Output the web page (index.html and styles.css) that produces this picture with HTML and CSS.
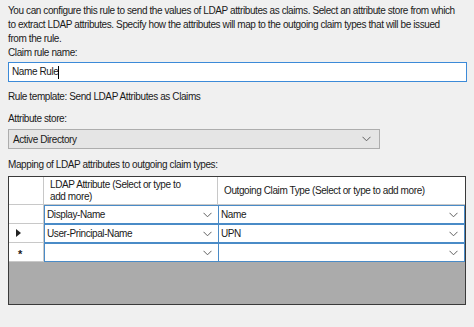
FILE: index.html
```html
<!DOCTYPE html>
<html lang="en">
<head>
<meta charset="UTF-8">
<title>Configure Rule</title>
<link rel="stylesheet" href="styles.css">
</head>
<body>
<div class="dialog">
  <p class="intro">You can configure this rule to send the values of LDAP attributes as claims. Select an attribute store from which to extract LDAP attributes. Specify how the attributes will map to the outgoing claim types that will be issued from the rule.</p>

  <label class="lbl lbl-name">Claim rule name:</label>
  <div class="textbox">Name Rule<span class="caret"></span></div>

  <div class="lbl lbl-template">Rule template: Send LDAP Attributes as Claims</div>

  <label class="lbl lbl-store">Attribute store:</label>
  <div class="combo">
    <span>Active Directory</span>
    <svg class="chev" width="9" height="6" viewBox="0 0 9 6"><path d="M0.5 0.8 L4.5 4.8 L8.5 0.8" fill="none" stroke="#606060" stroke-width="1"/></svg>
  </div>

  <label class="lbl lbl-map">Mapping of LDAP attributes to outgoing claim types:</label>
  <div class="grid">
    <div class="row head">
      <div class="rh"></div>
      <div class="hc">LDAP Attribute (Select or type to add more)</div>
      <div class="hc">Outgoing Claim Type (Select or type to add more)</div>
    </div>
    <div class="row">
      <div class="rh"></div>
      <div class="cell"><span>Display-Name</span><svg class="chev" width="9" height="6" viewBox="0 0 9 6"><path d="M0.5 0.8 L4.5 4.8 L8.5 0.8" fill="none" stroke="#606060" stroke-width="1"/></svg></div>
      <div class="cell"><span>Name</span><svg class="chev" width="9" height="6" viewBox="0 0 9 6"><path d="M0.5 0.8 L4.5 4.8 L8.5 0.8" fill="none" stroke="#606060" stroke-width="1"/></svg></div>
    </div>
    <div class="row">
      <div class="rh"><svg width="5" height="8" viewBox="0 0 5 8"><path d="M0 0 L5 4 L0 8 Z" fill="#222"/></svg></div>
      <div class="cell"><span>User-Principal-Name</span><svg class="chev" width="9" height="6" viewBox="0 0 9 6"><path d="M0.5 0.8 L4.5 4.8 L8.5 0.8" fill="none" stroke="#606060" stroke-width="1"/></svg></div>
      <div class="cell"><span>UPN</span><svg class="chev" width="9" height="6" viewBox="0 0 9 6"><path d="M0.5 0.8 L4.5 4.8 L8.5 0.8" fill="none" stroke="#606060" stroke-width="1"/></svg></div>
    </div>
    <div class="row">
      <div class="rh"><span class="star">*</span></div>
      <div class="cell"><span></span><svg class="chev" width="9" height="6" viewBox="0 0 9 6"><path d="M0.5 0.8 L4.5 4.8 L8.5 0.8" fill="none" stroke="#606060" stroke-width="1"/></svg></div>
      <div class="cell"><span></span><svg class="chev" width="9" height="6" viewBox="0 0 9 6"><path d="M0.5 0.8 L4.5 4.8 L8.5 0.8" fill="none" stroke="#606060" stroke-width="1"/></svg></div>
    </div>
    <div class="empty"></div>
  </div>
</div>
</body>
</html>
```

FILE: styles.css
```css
*{
	margin:0;
	padding:0;
	box-sizing:border-box;
	}
html,body{
	background:#f0f0f0;
	}
body{
	font-family:"Liberation Sans",Arial,sans-serif;
	font-size:10px;
	letter-spacing:-0.4px;
	color:#1a1a1a;
	}
.dialog{
	padding:4px 8px 0 8px;
	display:flex;
	flex-direction:column;
	}
.intro{
	line-height:14px;
	padding-right:6px;
	}
.lbl{
	display:block;
	line-height:14px;
	}
.lbl-name{
	margin-top:0;
	}
.textbox{
	margin-top:2px;
	height:20px;
	width:459px;
	border:1px solid #3c8ad8;
	background:#fff;
	padding:0 3px;
	line-height:18px;
	display:flex;
	align-items:center;
	}
.caret{
	display:inline-block;
	width:1px;
	height:13px;
	background:#000;
	}
.lbl-template{
	margin-top:8px;
	}
.lbl-store{
	margin-top:8px;
	}
.combo{
	margin-top:3px;
	width:372px;
	height:20px;
	border:1px solid #adadad;
	background:#e5e5e5;
	padding:0 8px 0 4px;
	display:flex;
	align-items:center;
	justify-content:space-between;
	}
.lbl-map{
	margin-top:9px;
	}
.grid{
	margin-top:4px;
	width:458px;
	height:129px;
	border:1px solid #3a3a3a;
	background:#ababab;
	display:flex;
	flex-direction:column;
	}
.row{
	display:grid;
	grid-template-columns:35px 174px 1fr;
	height:19px;
	background:#fff;
	}
.row.head{
	height:28px;
	}
.rh{
	border-right:1px solid #c8c8c8;
	border-bottom:1px solid #c8c8c8;
	display:flex;
	align-items:center;
	padding-left:7px;
	background:#fff;
	}
.star{
	font-size:11px;
	font-weight:bold;
	line-height:10px;
	margin-top:4px;
	padding-left:2px;
	}
.hc{
	border-right:1px solid #c8c8c8;
	border-bottom:1px solid #c8c8c8;
	padding:1px 32px 0 6px;
	line-height:12px;
	display:flex;
	align-items:center;
	}
.hc:last-child{
	border-right:none;
	}
.cell{
	border:1.5px solid #4a8bc7;
	margin-right:-1px;
	display:flex;
	align-items:center;
	justify-content:space-between;
	padding:0 6px 0 2px;
	background:#fff;
	}
.cell:last-child{
	margin-right:0;
	}
.chev{
	flex:none;
	}
.empty{
	flex:1;
	}
```
